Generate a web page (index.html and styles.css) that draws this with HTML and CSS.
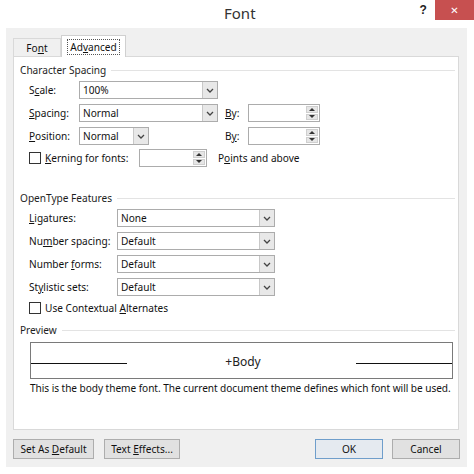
FILE: index.html
```html
<!DOCTYPE html>
<html>
<head>
<meta charset="utf-8">
<link rel="stylesheet" href="styles.css">
</head>
<body>
<div class="window">
  <div class="titlebar">
    <span class="title">Font</span>
    <span class="help">?</span>
    <span class="close">&#x2715;</span>
  </div>
  <div class="dialog">
    <div class="tabs">
      <div class="tab"><span>Fo<u>n</u>t</span></div>
      <div class="tab active"><span class="focus">Ad<u>v</u>anced</span></div>
    </div>
    <div class="panel">
      <div class="group-head first"><span>Character Spacing</span><i></i></div>

      <div class="row r-scale">
        <span class="lbl lbl-cs">S<u>c</u>ale:</span>
        <div class="combo w139"><span class="val">100%</span><span class="arrow"><svg width="8" height="5" viewBox="0 0 8 5"><path d="M1 1 L4 4 L7 1" fill="none" stroke="#444" stroke-width="1.3"/></svg></span></div>
      </div>
      <div class="row r5">
        <span class="lbl lbl-cs"><u>S</u>pacing:</span>
        <div class="combo w139"><span class="val">Normal</span><span class="arrow"><svg width="8" height="5" viewBox="0 0 8 5"><path d="M1 1 L4 4 L7 1" fill="none" stroke="#444" stroke-width="1.3"/></svg></span></div>
        <span class="by"><u>B</u>y:</span>
        <div class="spin w72"><span class="sbtn"><b class="up"></b><b class="dn"></b></span></div>
      </div>
      <div class="row r5">
        <span class="lbl lbl-cs"><u>P</u>osition:</span>
        <div class="combo w70"><span class="val">Normal</span><span class="arrow"><svg width="8" height="5" viewBox="0 0 8 5"><path d="M1 1 L4 4 L7 1" fill="none" stroke="#444" stroke-width="1.3"/></svg></span></div>
        <span class="by by2">B<u>y</u>:</span>
        <div class="spin w72"><span class="sbtn"><b class="up"></b><b class="dn"></b></span></div>
      </div>
      <div class="row r4">
        <span class="check"></span>
        <span class="kern"><u>K</u>erning for fonts:</span>
        <div class="spin w68"><span class="sbtn"><b class="up"></b><b class="dn"></b></span></div>
        <span class="pts">P<u>o</u>ints and above</span>
      </div>

      <div class="group-head second"><span>OpenType Features</span><i></i></div>

      <div class="row r4">
        <span class="lbl lbl-ot"><u>L</u>igatures:</span>
        <div class="combo w158"><span class="val">None</span><span class="arrow"><svg width="8" height="5" viewBox="0 0 8 5"><path d="M1 1 L4 4 L7 1" fill="none" stroke="#444" stroke-width="1.3"/></svg></span></div>
      </div>
      <div class="row r5">
        <span class="lbl lbl-ot">Nu<u>m</u>ber spacing:</span>
        <div class="combo w158"><span class="val">Default</span><span class="arrow"><svg width="8" height="5" viewBox="0 0 8 5"><path d="M1 1 L4 4 L7 1" fill="none" stroke="#444" stroke-width="1.3"/></svg></span></div>
      </div>
      <div class="row r5">
        <span class="lbl lbl-ot">Number <u>f</u>orms:</span>
        <div class="combo w158"><span class="val">Default</span><span class="arrow"><svg width="8" height="5" viewBox="0 0 8 5"><path d="M1 1 L4 4 L7 1" fill="none" stroke="#444" stroke-width="1.3"/></svg></span></div>
      </div>
      <div class="row r5">
        <span class="lbl lbl-ot">St<u>y</u>listic sets:</span>
        <div class="combo w158"><span class="val">Default</span><span class="arrow"><svg width="8" height="5" viewBox="0 0 8 5"><path d="M1 1 L4 4 L7 1" fill="none" stroke="#444" stroke-width="1.3"/></svg></span></div>
      </div>
      <div class="row r3">
        <span class="check"></span>
        <span class="kern">Use Contextual <u>A</u>lternates</span>
      </div>

      <div class="group-head third"><span>Preview</span><i></i></div>
      <div class="preview">
        <span class="pline"></span>
        <span class="ptext">+Body</span>
        <span class="pline"></span>
      </div>
      <div class="desc">This is the body theme font. The current document theme defines which font will be used.</div>
    </div>
    <div class="buttons">
      <div class="btn b-def"><span>Set As <u>D</u>efault</span></div>
      <div class="btn b-fx"><span>Text <u>E</u>ffects...</span></div>
      <div class="spacer"></div>
      <div class="btn b-ok"><span>OK</span></div>
      <div class="btn b-cancel"><span>Cancel</span></div>
    </div>
  </div>
</div>
</body>
</html>
```

FILE: styles.css
```css
* { box-sizing: border-box; }
html, body { margin: 0; padding: 0; background: #fff; }
body {
  width: 474px; height: 474px; overflow: hidden;
  font-family: "Noto Sans", "Open Sans", sans-serif;
  font-size: 10.1px;
  color: #111;
}
u { text-decoration: underline; text-underline-offset: 1px; }

.window { width: 474px; }

.titlebar {
  height: 28px;
  display: flex;
  align-items: flex-start;
}
.title {
  margin-left: 224px;
  margin-top: 3px;
  font-size: 15px;
  color: #333;
}
.help {
  margin-left: 164px;
  margin-top: 3px;
  font-size: 12px;
  font-weight: bold;
  color: #222;
  font-family: "Liberation Sans", sans-serif;
}
.close {
  margin-left: 8px;
  width: 40px; height: 20px;
  background: #c75050;
  color: #fff;
  font-size: 10px;
  font-weight: bold;
  display: flex; align-items: center; justify-content: center;
  font-family: "DejaVu Sans", sans-serif;
}

.dialog {
  margin-left: 6px;
  width: 461px;
  height: 439px;
  background: #f0f0f0;
  padding: 7px 7px 0 7px;
}

.tabs {
  display: flex;
  align-items: flex-end;
  height: 21px;
}
.tab {
  height: 18px;
  width: 48px;
  border: 1px solid #d9d9d9;
  border-bottom: none;
  background: #f0f0f0;
  display: flex; align-items: center; justify-content: center;
}
.tab.active {
  height: 22px;
  width: 65px;
  margin-bottom: -1px;
  background: #fff;
  position: relative;
  z-index: 1;
  border-color: #d0d0d0;
}
.focus {
  border: 1px dotted #555;
  padding: 0 2px;
  line-height: 14px;
}

.panel {
  width: 446px;
  height: 374px;
  background: #fff;
  border: 1px solid #d9d9d9;
  padding-top: 6px;
}

.group-head {
  display: flex; align-items: center;
  height: 14px;
  margin-left: 6px;
  margin-right: 3px;
}
.group-head span { color: #1e1e1e; }
.group-head i {
  flex: 1;
  border-top: 1px solid #e3e3e3;
  margin-left: 5px;
}
.group-head.second { margin-top: 24px; }
.group-head.third { margin-top: 6px; }

.row {
  display: flex; align-items: center;
  height: 18px;
  margin-left: 15px;
}
.r-scale { margin-top: 4px; }
.r3 { margin-top: 3px; }
.r4 { margin-top: 4px; }
.r5 { margin-top: 5px; }

.lbl-cs { width: 50px; }
.lbl-ot { width: 88px; }

.combo {
  height: 18px;
  border: 1px solid #acacac;
  background: #fff;
  display: flex;
  align-items: stretch;
}
.combo .val { flex: 1; padding-left: 3px; display: flex; align-items: center; }
.combo .arrow {
  width: 15px;
  background: #e8e8e8;
  border-left: 1px solid #c8c8c8;
  display: flex; align-items: center; justify-content: center;
}
.w139 { width: 139px; }
.w70 { width: 70px; }
.w158 { width: 158px; }

.by { margin-left: 7px; width: 23px; }
.by2 { margin-left: 76px; }

.spin {
  height: 18px;
  border: 1px solid #acacac;
  background: #fff;
  display: flex; justify-content: flex-end;
}
.w72 { width: 72px; }
.w68 { width: 68px; }
.sbtn {
  width: 14px;
  display: flex; flex-direction: column;
  padding: 1px;
  gap: 1px;
}
.sbtn b {
  flex: 1;
  background: #e6e6e6;
  border: 1px solid #cfcfcf;
  display: flex; align-items: center; justify-content: center;
}
.sbtn b::after {
  content: "";
  width: 0; height: 0;
  border-left: 3px solid transparent;
  border-right: 3px solid transparent;
}
.sbtn b.up::after { border-bottom: 3px solid #333; }
.sbtn b.dn::after { border-top: 3px solid #333; }

.check {
  width: 12px; height: 12px;
  border: 1px solid #333;
  background: #fff;
}
.kern { margin-left: 4px; width: 94px; white-space: nowrap; }
.pts { margin-left: 11px; }

.preview {
  margin: 5px 0 0 16px;
  width: 423px;
  height: 37px;
  border: 1px solid #7a7a7a;
  display: flex;
  align-items: center;
}
.pline {
  width: 96px;
  border-top: 1px solid #111;
  align-self: flex-end;
  margin-bottom: 14px;
}
.ptext {
  flex: 1;
  text-align: center;
  font-size: 12px;
  color: #222;
  padding-left: 3px;
  margin-top: 1px;
}
.desc {
  margin: 2px 0 0 16px;
  height: 14px;
  line-height: 14px;
  white-space: nowrap;
  letter-spacing: -0.05px;
}

.buttons {
  display: flex;
  margin-top: 9px;
  height: 20px;
}
.btn {
  height: 20px;
  border: 1px solid #adadad;
  background: #e1e1e1;
  display: flex; align-items: center; justify-content: center;
}
.b-def { width: 81px; }
.b-fx { width: 76px; margin-left: 10px; }
.spacer { flex: 1; }
.b-ok { width: 68px; border-color: #6f9ecb; background: #e5eaf0; }
.b-cancel { width: 68px; margin-left: 9px; }
```
